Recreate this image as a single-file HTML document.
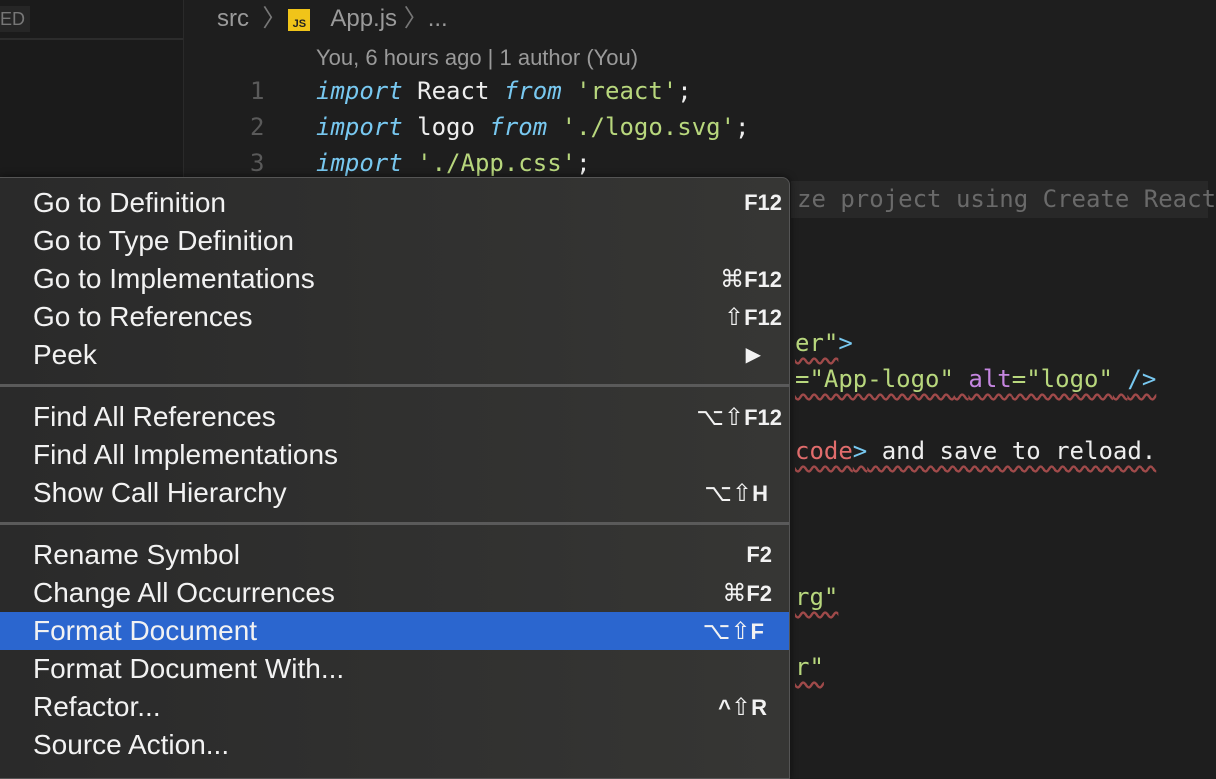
<!DOCTYPE html>
<html><head><meta charset="utf-8"><style>
body{margin:0;width:1216px;height:774px;background:#1e1e1e;overflow:hidden;position:relative;font-family:"Liberation Sans",sans-serif}
.abs{position:absolute;white-space:pre}
.mono{font-family:"DejaVu Sans Mono","Liberation Mono",monospace;font-size:24px;line-height:36px}
.side{left:0;top:0;width:183px;height:774px;background:#1b1b1b;border-right:1px solid #2a2a2a}
.menu{left:0;top:177px;width:789px;height:600px;background:linear-gradient(90deg,#2a2a2a,#363634);border:1px solid #555;border-left:none;border-radius:0 8px 0 0;box-shadow:0 0 8px rgba(0,0,0,.6)}
.it{position:absolute;left:0;width:789px;height:38px;color:#f2f2f2;font-size:28px;line-height:38px}
.it span.l{position:absolute;left:33px}
.it span.r{position:absolute;font-size:22px;font-weight:bold;font-family:"Liberation Sans","DejaVu Sans",sans-serif}
.sep{position:absolute;left:0;width:789px;height:3px;background:#5a5a5a}
.kw{color:#78c8f0;font-style:italic}.str{color:#b8d77d}.w{color:#eee}.cm{color:#6a6a6a}
.sq{text-decoration:underline wavy #a04a4a;text-underline-offset:6px}
.g{font-family:"DejaVu Sans",sans-serif;font-weight:normal;font-size:24px}
</style></head><body>
<div class="abs side"></div>
<div class="abs" style="left:0;top:6px;width:30px;height:26px;background:#262626;color:#777;font-size:18px;line-height:26px">ED</div>
<div class="abs" style="left:0;top:38px;width:183px;height:2px;background:#2c2c2c"></div>
<div class="abs" style="left:217px;top:3px;font-size:24px;color:#9a9a9a;line-height:30px">src  <span style="color:#777;font-family:'DejaVu Sans'">〉</span><span style="display:inline-block;width:22px;height:22px;background:#f0c419;color:#222;font-size:11px;font-weight:bold;vertical-align:middle;text-align:center;line-height:30px;margin-left:2px">JS</span>   App.js <span style="color:#777;font-family:'DejaVu Sans'">〉</span>...</div>
<div class="abs" style="left:316px;top:45px;font-size:22px;color:#9a9a9a;line-height:26px">You, 6 hours ago | 1 author (You)</div>
<div class="abs mono" style="left:250px;top:73px;color:#5a5a5a">1<br>2<br>3</div>
<div class="abs mono" style="left:316px;top:73px"><span class="kw">import</span> <span class="w">React</span> <span class="kw">from</span> <span class="str">'react'</span><span class="w">;</span>
<span class="kw">import</span> <span class="w">logo</span> <span class="kw">from</span> <span class="str">'./logo.svg'</span><span class="w">;</span>
<span class="kw">import</span> <span class="str">'./App.css'</span><span class="w">;</span></div>
<div class="abs" style="left:791px;top:181px;width:417px;height:37px;background:#282828"></div>
<div class="abs mono cm" style="left:797px;top:181px">ze project using Create React</div>
<div class="abs mono" style="left:795px;top:325px"><span class="str sq">er"</span><span style="color:#78c8f0">&gt;</span></div>
<div class="abs mono" style="left:795px;top:361px"><span class="sq"><span class="str">="App-logo"</span> <span style="color:#c586e0">alt</span><span class="str">="logo"</span> <span style="color:#78c8f0">/&gt;</span></span></div>
<div class="abs mono" style="left:795px;top:433px"><span class="sq"><span style="color:#e06c6c">code</span><span style="color:#78c8f0">&gt;</span><span class="w"> and save to reload.</span></span></div>
<div class="abs mono" style="left:795px;top:579px"><span class="str sq">rg"</span></div>
<div class="abs mono" style="left:795px;top:649px"><span class="str sq">r"</span></div>
<div class="abs menu">
<div class="it" style="top:6px"><span class="l">Go to Definition</span><span class="r" style="right:7px">F12</span></div>
<div class="it" style="top:44px"><span class="l">Go to Type Definition</span></div>
<div class="it" style="top:82px"><span class="l">Go to Implementations</span><span class="r" style="right:7px"><span class="g">⌘</span>F12</span></div>
<div class="it" style="top:120px"><span class="l">Go to References</span><span class="r" style="right:7px"><span class="g">⇧</span>F12</span></div>
<div class="it" style="top:158px"><span class="l">Peek</span><span class="r" style="right:28px;font-size:20px">▶</span></div>
<div class="sep" style="top:206px"></div>
<div class="it" style="top:220px"><span class="l">Find All References</span><span class="r" style="right:7px"><span class="g">⌥⇧</span>F12</span></div>
<div class="it" style="top:258px"><span class="l">Find All Implementations</span></div>
<div class="it" style="top:296px"><span class="l">Show Call Hierarchy</span><span class="r" style="right:21px"><span class="g">⌥⇧</span>H</span></div>
<div class="sep" style="top:344px"></div>
<div class="it" style="top:358px"><span class="l">Rename Symbol</span><span class="r" style="right:17px">F2</span></div>
<div class="it" style="top:396px"><span class="l">Change All Occurrences</span><span class="r" style="right:17px"><span class="g">⌘</span>F2</span></div>
<div class="it" style="top:434px;background:#2b66cf;height:38px"><span class="l">Format Document</span><span class="r" style="right:25px"><span class="g">⌥⇧</span>F</span></div>
<div class="it" style="top:472px"><span class="l">Format Document With...</span></div>
<div class="it" style="top:510px"><span class="l">Refactor...</span><span class="r" style="right:22px">^<span class="g">⇧</span>R</span></div>
<div class="it" style="top:548px"><span class="l">Source Action...</span></div>
</div>
</body></html>
